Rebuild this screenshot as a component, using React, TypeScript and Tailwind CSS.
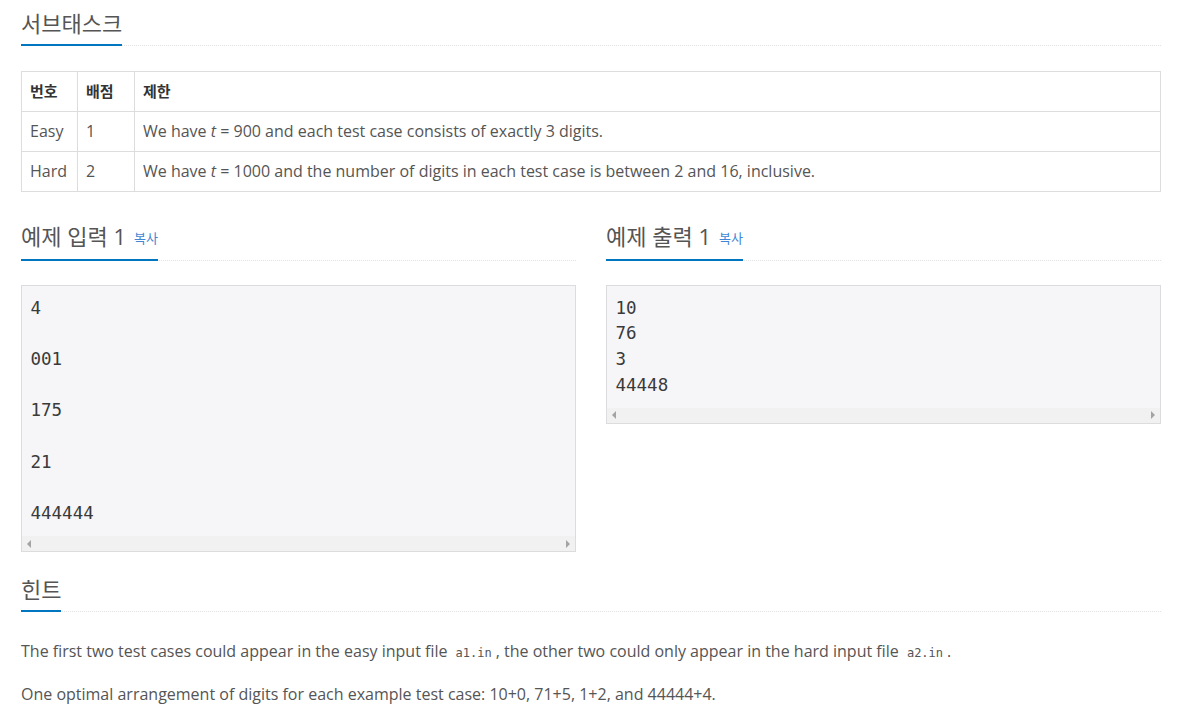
import React from 'react';

// ─── Shared pieces ────────────────────────────────────────────────────────────

function Headline({ children }: { children: React.ReactNode }) {
  return (
    <div className="flex border-b border-dotted border-[#e2e2e2]">
      <h2 className="-mb-px border-b-2 border-[#0076c0] pb-[10px] text-[22px] font-normal leading-[22px] text-[#555]">
        {children}
      </h2>
    </div>
  );
}

function CopyLink() {
  return <span className="ml-[8px] align-[2px] text-[13px] text-[#3f86d4]">복사</span>;
}

function Scrollbar() {
  return (
    <div className="flex h-[15px] items-center justify-between bg-[#f1f1f1] px-[5px]">
      <svg width="5" height="8" viewBox="0 0 5 8">
        <path d="M4 0 L0 4 L4 8 Z" fill="#a3a3a3" />
      </svg>
      <svg width="5" height="8" viewBox="0 0 5 8">
        <path d="M1 0 L5 4 L1 8 Z" fill="#a3a3a3" />
      </svg>
    </div>
  );
}

function SampleBox({ lines }: { lines: string[] }) {
  return (
    <div className="border border-[#dcdcdf] bg-[#f6f6f8]">
      <pre className="px-[8.5px] py-[9.5px] font-['DejaVu_Sans_Mono',monospace] text-[17.5px] leading-[25.7px] text-[#3a3a3a]">
        {lines.join('\n')}
      </pre>
      <Scrollbar />
    </div>
  );
}

function Code({ children }: { children: React.ReactNode }) {
  return (
    <code className="px-[4px] font-['DejaVu_Sans_Mono',monospace] text-[12px] text-[#555]">{children}</code>
  );
}

// ─── Data ─────────────────────────────────────────────────────────────────────

const subtasks = [
  { name: 'Easy', score: '1', t: '900', rest: 'and each test case consists of exactly 3 digits.' },
  { name: 'Hard', score: '2', t: '1000', rest: 'and the number of digits in each test case is between 2 and 16, inclusive.' },
];

const sampleInput = ['4', '', '001', '', '175', '', '21', '', '444444'];
const sampleOutput = ['10', '76', '3', '44448'];

// ─── Page ─────────────────────────────────────────────────────────────────────

export default function App() {
  return (
    <div className="min-h-screen bg-white pl-[21px] pr-[17px] pt-[12px] font-['Open_Sans','Noto_Sans_CJK_KR',sans-serif] text-[16px] text-[#555]">
      {/* 서브태스크 */}
      <section>
        <Headline>서브태스크</Headline>
        <table className="mt-[25px] w-full border-collapse border border-[#ddd] text-left">
          <thead>
            <tr>
              <th className="w-[56px] border border-[#ddd] px-[8px] py-[8px] text-[15px] font-bold leading-[23px] text-[#333]">번호</th>
              <th className="w-[57px] border border-[#ddd] px-[8px] py-[8px] text-[15px] font-bold leading-[23px] text-[#333]">배점</th>
              <th className="border border-[#ddd] px-[8px] py-[8px] text-[15px] font-bold leading-[23px] text-[#333]">제한</th>
            </tr>
          </thead>
          <tbody>
            {subtasks.map((s) => (
              <tr key={s.name}>
                <td className="border border-[#ddd] px-[8px] py-[8px] leading-[23px]">{s.name}</td>
                <td className="border border-[#ddd] px-[8px] py-[8px] leading-[23px]">{s.score}</td>
                <td className="border border-[#ddd] px-[8px] py-[8px] leading-[23px]">
                  We have <i>t</i> = {s.t} {s.rest}
                </td>
              </tr>
            ))}
          </tbody>
        </table>
      </section>

      {/* 예제 */}
      <section className="mt-[33px] grid grid-cols-2 gap-[30px]">
        <div>
          <Headline>
            예제 입력 1<CopyLink />
          </Headline>
          <div className="mt-[24px]">
            <SampleBox lines={sampleInput} />
          </div>
        </div>
        <div>
          <Headline>
            예제 출력 1<CopyLink />
          </Headline>
          <div className="mt-[24px]">
            <SampleBox lines={sampleOutput} />
          </div>
        </div>
      </section>

      {/* 힌트 */}
      <section className="mt-[26px]">
        <Headline>힌트</Headline>
        <div className="mt-[27px] leading-[25.6px]">
          <p className="mb-[15px]">
            The first two test cases could appear in the easy input file <Code>a1.in</Code>, the other two could only appear in the hard input file <Code>a2.in</Code>.
          </p>
          <p>One optimal arrangement of digits for each example test case: 10+0, 71+5, 1+2, and 44444+4.</p>
        </div>
      </section>
    </div>
  );
}
